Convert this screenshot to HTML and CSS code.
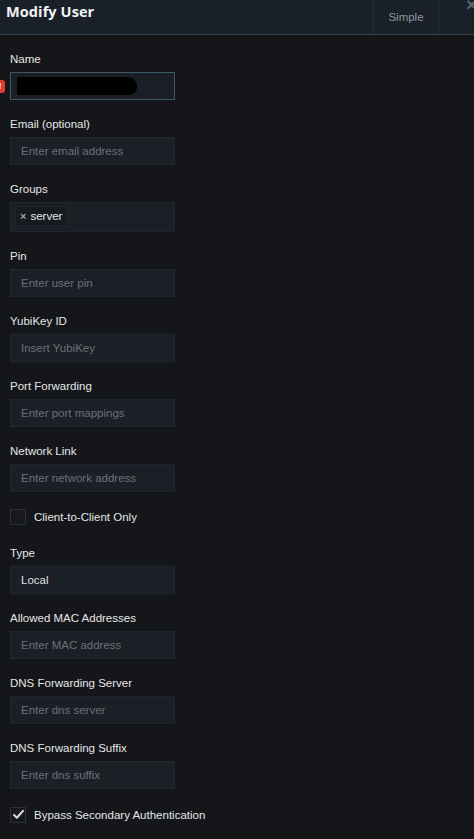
FILE: index.html
```html
<!DOCTYPE html>
<html>
<head>
<meta charset="utf-8">
<link rel="stylesheet" href="styles.css">
</head>
<body>
<div class="modal">
  <div class="header">
    <div class="title">Modify User</div>
    <div class="hbtn">Simple</div>
    <div class="close">×</div>
  </div>
  <div class="body">
    <div class="field">
      <label class="label">Name</label>
      <div class="input focus"><span class="redact"></span><span class="err">!</span></div>
    </div>
    <div class="field">
      <label class="label">Email (optional)</label>
      <div class="input ph">Enter email address</div>
    </div>
    <div class="field groups">
      <label class="label">Groups</label>
      <div class="input tall"><span class="tag"><span class="tx">×</span>server</span></div>
    </div>
    <div class="field">
      <label class="label">Pin</label>
      <div class="input ph">Enter user pin</div>
    </div>
    <div class="field">
      <label class="label">YubiKey ID</label>
      <div class="input ph">Insert YubiKey</div>
    </div>
    <div class="field">
      <label class="label">Port Forwarding</label>
      <div class="input ph">Enter port mappings</div>
    </div>
    <div class="field">
      <label class="label">Network Link</label>
      <div class="input ph">Enter network address</div>
    </div>
    <div class="check first"><span class="box"></span>Client-to-Client Only</div>
    <div class="field">
      <label class="label">Type</label>
      <div class="input val">Local</div>
    </div>
    <div class="field">
      <label class="label">Allowed MAC Addresses</label>
      <div class="input ph">Enter MAC address</div>
    </div>
    <div class="field">
      <label class="label">DNS Forwarding Server</label>
      <div class="input ph">Enter dns server</div>
    </div>
    <div class="field">
      <label class="label">DNS Forwarding Suffix</label>
      <div class="input ph">Enter dns suffix</div>
    </div>
    <div class="check last"><span class="box"><svg viewBox="0 0 16 16" width="13" height="13"><path d="M2.5 8.5 L6 12 L13.5 3.5" fill="none" stroke="#d6d8da" stroke-width="2.6" stroke-linecap="round" stroke-linejoin="round"/></svg></span>Bypass Secondary Authentication</div>
  </div>
</div>
</body>
</html>
```
FILE: styles.css
```css
html, body {
  margin: 0;
  padding: 0;
  background: #141619;
  height: 100%;
}
body {
  font-family: "Liberation Sans", Arial, sans-serif;
  color: #e2e4e6;
  overflow: hidden;
}
.modal {
  width: 474px;
  height: 839px;
  background: #141619;
}
.header {
  height: 34px;
  background: #1a2028;
  border-bottom: 1px solid #2c4450;
  display: flex;
  align-items: stretch;
  position: relative;
}
.title {
  flex: 1;
  font-family: "Open Sans", "Noto Sans", sans-serif;
  font-weight: 700;
  font-size: 14.5px;
  color: #f2f3f4;
  padding-left: 6px;
  line-height: 23px;
  letter-spacing: 0.1px;
}
.hbtn {
  width: 64px;
  border-left: 1px solid #262d35;
  border-right: 1px solid #262d35;
  color: #8d959d;
  font-size: 11.5px;
  text-align: center;
  line-height: 34px;
  margin-right: 35px;
}
.close {
  position: absolute;
  right: -3px;
  top: -5px;
  color: #5e656c;
  font-size: 19px;
  font-weight: 700;
  line-height: 20px;
}
.body {
  padding: 17px 0 0 10px;
}
.field {
  margin-bottom: 17.05px;
}
.label {
  display: block;
  font-size: 11.5px;
  line-height: 14px;
  color: #e4e6e8;
  margin-bottom: 6px;
}
.input {
  width: 165px;
  height: 28px;
  box-sizing: border-box;
  background: #1b2027;
  border: 1px solid #1f262d;
  font-size: 11.5px;
  line-height: 26px;
  padding-left: 10px;
  position: relative;
}
.input.ph { color: #6a7178; }
.input.val { color: #dfe1e3; }
.input.tall { height: 30px; padding-left: 4px; padding-top: 3px; line-height: 20px; }
.input.focus {
  border-color: #3a5866;
  background: #1a1f25;
}
.redact {
  position: absolute;
  left: 6px;
  top: 4px;
  width: 120px;
  height: 18px;
  background: #000;
  border-radius: 2px 9px 8px 2px;
}
.err {
  position: absolute;
  left: -16px;
  top: 7px;
  width: 10px;
  height: 13px;
  background: #e23c36;
  border-radius: 3px;
  color: #fff;
  font-size: 9px;
  line-height: 13px;
  text-align: center;
  font-weight: 700;
}
.tag {
  display: inline-block;
  background: #161b20;
  border: 1px solid #1f252b;
  color: #e6e8ea;
  font-size: 11.5px;
  line-height: 18px;
  padding: 0 5px 0 4px;
}
.tx {
  color: #9aa0a6;
  font-size: 11px;
  font-weight: 700;
  margin-right: 4px;
}
.check {
  display: flex;
  align-items: center;
  font-size: 11.5px;
  color: #e4e6e8;
  height: 16px;
}
.check.first { margin-top: 0; margin-bottom: 21px; }
.check.last { margin-top: 0; }
.box {
  width: 14px;
  height: 14px;
  border: 1px solid #2a3038;
  background: #17191d;
  margin-right: 8px;
  display: flex;
  align-items: center;
  justify-content: center;
}
```
